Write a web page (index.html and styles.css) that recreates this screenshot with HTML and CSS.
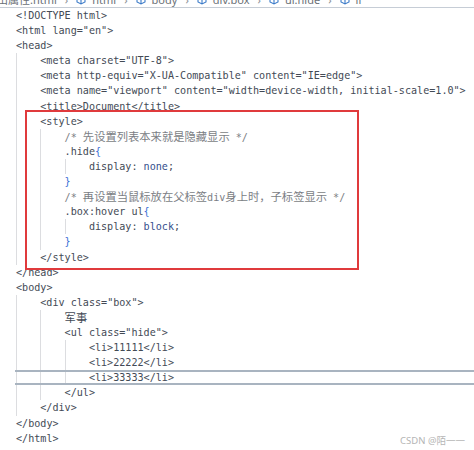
FILE: index.html
```html
<!DOCTYPE html>
<html lang="zh">
<head>
<meta charset="UTF-8">
<title>Document</title>
<link rel="stylesheet" href="styles.css">
</head>
<body>
<div class="crumbs">
  <div class="crumb-row">
    <span class="cr-file">山属性.html</span>
    <span class="sep">›</span>
    <svg class="ico" viewBox="0 0 10 10"><path d="M5 1 L9 3 L9 7 L5 9 L1 7 L1 3 Z M1 3 L5 5 L9 3 M5 5 L5 9" fill="none" stroke="#3d7cc9" stroke-width="1.1"/></svg>
    <span>html</span>
    <span class="sep">›</span>
    <svg class="ico" viewBox="0 0 10 10"><path d="M5 1 L9 3 L9 7 L5 9 L1 7 L1 3 Z M1 3 L5 5 L9 3 M5 5 L5 9" fill="none" stroke="#3d7cc9" stroke-width="1.1"/></svg>
    <span>body</span>
    <span class="sep">›</span>
    <svg class="ico" viewBox="0 0 10 10"><path d="M5 1 L9 3 L9 7 L5 9 L1 7 L1 3 Z M1 3 L5 5 L9 3 M5 5 L5 9" fill="none" stroke="#3d7cc9" stroke-width="1.1"/></svg>
    <span>div.box</span>
    <span class="sep">›</span>
    <svg class="ico" viewBox="0 0 10 10"><path d="M5 1 L9 3 L9 7 L5 9 L1 7 L1 3 Z M1 3 L5 5 L9 3 M5 5 L5 9" fill="none" stroke="#3d7cc9" stroke-width="1.1"/></svg>
    <span>ul.hide</span>
    <span class="sep">›</span>
    <svg class="ico" viewBox="0 0 10 10"><path d="M5 1 L9 3 L9 7 L5 9 L1 7 L1 3 Z M1 3 L5 5 L9 3 M5 5 L5 9" fill="none" stroke="#3d7cc9" stroke-width="1.1"/></svg>
    <span>li</span>
  </div>
</div>
<div class="code">
  <div class="ln">&lt;!DOCTYPE html&gt;</div>
  <div class="ln">&lt;html lang="en"&gt;</div>
  <div class="ln">&lt;head&gt;</div>
  <div class="ln"><span class="g"></span>&lt;meta charset="UTF-8"&gt;</div>
  <div class="ln"><span class="g"></span>&lt;meta http-equiv="X-UA-Compatible" content="IE=edge"&gt;</div>
  <div class="ln"><span class="g"></span>&lt;meta name="viewport" content="width=device-width, initial-scale=1.0"&gt;</div>
  <div class="ln"><span class="g"></span>&lt;title&gt;Document&lt;/title&gt;</div>
  <div class="ln"><span class="g"></span>&lt;style&gt;</div>
  <div class="ln"><span class="g"></span><span class="g"></span><span class="c">/* <span class="cjk">先设置列表本来就是隐藏显示</span> */</span></div>
  <div class="ln"><span class="g"></span><span class="g"></span>.hide<span class="b">{</span></div>
  <div class="ln"><span class="g"></span><span class="g"></span><span class="g"></span>display: <span class="v">none</span>;</div>
  <div class="ln"><span class="g"></span><span class="g"></span><span class="b">}</span></div>
  <div class="ln"><span class="g"></span><span class="g"></span><span class="c">/* <span class="cjk">再设置当鼠标放在父标签</span>div<span class="cjk">身上时，子标签显示</span> */</span></div>
  <div class="ln"><span class="g"></span><span class="g"></span>.box:hover ul<span class="b">{</span></div>
  <div class="ln"><span class="g"></span><span class="g"></span><span class="g"></span>display: <span class="v">block</span>;</div>
  <div class="ln"><span class="g"></span><span class="g"></span><span class="b">}</span></div>
  <div class="ln"><span class="g"></span>&lt;/style&gt;</div>
  <div class="ln">&lt;/head&gt;</div>
  <div class="ln">&lt;body&gt;</div>
  <div class="ln"><span class="g"></span>&lt;div class="box"&gt;</div>
  <div class="ln"><span class="g"></span><span class="g"></span><span class="cjk">军事</span></div>
  <div class="ln"><span class="g"></span><span class="g"></span>&lt;ul class="hide"&gt;</div>
  <div class="ln"><span class="g"></span><span class="g"></span><span class="g"></span>&lt;li&gt;11111&lt;/li&gt;</div>
  <div class="ln"><span class="g"></span><span class="g"></span><span class="g"></span>&lt;li&gt;22222&lt;/li&gt;</div>
  <div class="ln cur"><span class="g"></span><span class="g"></span><span class="g"></span>&lt;li&gt;33333&lt;/li&gt;</div>
  <div class="ln"><span class="g"></span><span class="g"></span>&lt;/ul&gt;</div>
  <div class="ln"><span class="g"></span>&lt;/div&gt;</div>
  <div class="ln">&lt;/body&gt;</div>
  <div class="ln">&lt;/html&gt;</div>
  <div class="redbox"></div>
</div>
<div class="mark">CSDN @陌一一</div>
</body>
</html>
```
FILE: styles.css
```css
html, body {
  margin: 0;
  padding: 0;
  background: #ffffff;
  width: 474px;
  height: 450px;
  overflow: hidden;
  position: relative;
}
body {
  font-family: "DejaVu Sans Mono", "Noto Sans CJK SC", monospace;
  font-size: 10.1px;
  color: #434a55;
}
.crumbs {
  height: 7px;
  overflow: hidden;
  border-bottom: 1px solid #c6cdd6;
}
.crumb-row {
  margin-top: -6px;
  display: flex;
  align-items: center;
  gap: 6px;
  height: 12px;
  font-family: "Noto Sans", "Noto Sans CJK SC", sans-serif;
  font-size: 11px;
  line-height: 12px;
  color: #6a6f76;
  white-space: nowrap;
  margin-left: -3px;
}
.crumb-row .sep {
  color: #8a8f96;
  margin: 0 2px;
}
.ico {
  width: 10px;
  height: 10px;
  flex: none;
}
.code {
  position: relative;
  margin-left: 15px;
}
.ln {
  height: 15.1px;
  line-height: 15.1px;
  padding-left: 1px;
  white-space: pre;
  box-sizing: border-box;
}
.ln.cur {
  border-top: 2px solid #a9b4c0;
  border-bottom: 2px solid #a9b4c0;
  line-height: 11.1px;
}
.g {
  display: inline-block;
  width: 24.3px;
  height: 15.1px;
  border-left: 1px solid #dcdde0;
  box-sizing: border-box;
  vertical-align: top;
}
.ln.cur .g {
  height: 11.1px;
}
.cjk {
  font-family: "Noto Sans CJK SC", sans-serif;
  font-size: 11.3px;
}
.c {
  color: #7b7e84;
}
.b {
  color: #3a6fd6;
}
.v {
  color: #354f8c;
}
.redbox {
  position: absolute;
  left: 10px;
  top: 102px;
  width: 334px;
  height: 160px;
  border: 2px solid #e03a3c;
  box-sizing: border-box;
}
.mark {
  position: absolute;
  right: 9px;
  bottom: 3px;
  font-family: "Noto Sans", "Noto Sans CJK SC", sans-serif;
  font-size: 9.5px;
  color: #b5b5b5;
}
```
